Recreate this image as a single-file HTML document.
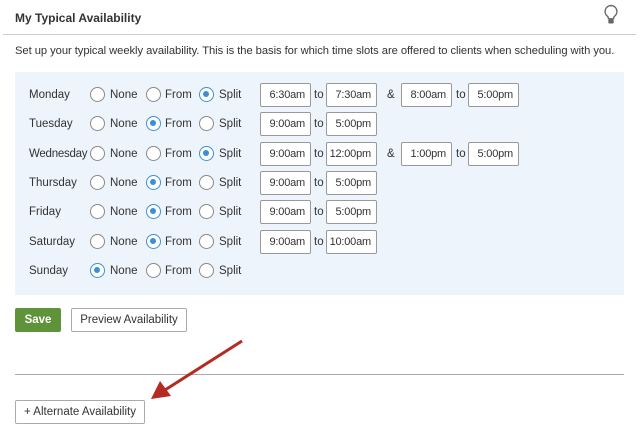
<!DOCTYPE html>
<html><head><style>
body{margin:0;width:640px;height:438px;background:#fff;font-family:"Liberation Sans",sans-serif;color:#333;position:relative;overflow:hidden}
.a{position:absolute}
.t{font-size:12px;font-weight:bold;left:15px;top:11px;color:#333}
.hr{left:3px;top:34px;width:633px;height:1px;background:#ccc}
.d{left:15px;top:45px;font-size:11.2px;color:#333;white-space:nowrap;letter-spacing:-0.05px}
.panel{left:15px;top:72px;width:609px;height:223px;background:#edf4fc}
.row{position:absolute;left:0;height:24px;font-size:11.5px;width:640px}
.row span{position:absolute;top:6px}
.r{position:absolute;top:4px;width:15px;height:15px;border:1px solid #888;border-radius:50%;background:#fff;box-sizing:border-box}
.r.on{border:1.5px solid #3a8fd8}
.r.on:after{content:"";position:absolute;left:3px;top:3px;width:6px;height:6px;border-radius:50%;background:#3a8fd8}
.b{position:absolute;top:0;height:24px;width:51px;border:1px solid #999;border-radius:2px;background:#fff;box-sizing:border-box;text-align:right;padding-right:5px;line-height:23px;font-size:11px;letter-spacing:-0.2px}
.btn{position:absolute;height:24px;border:1px solid #aaa;border-radius:2px;box-sizing:border-box;font-size:11.5px;line-height:23px;text-align:center;background:#fff;color:#333}
</style></head><body>
<div class="a t">My Typical Availability</div>
<svg class="a" style="left:603px;top:4px" width="16" height="22" viewBox="0 0 16 22"><path d="M8 1.5a6 6 0 0 0-3.5 10.8c.8.7 1 1.5 1 2.5h5c0-1 .2-1.8 1-2.5A6 6 0 0 0 8 1.5z" fill="none" stroke="#666" stroke-width="1.4"/><rect x="5.3" y="15.5" width="5.4" height="4" rx="1" fill="#666"/></svg>
<div class="a hr"></div>
<div class="a d">Set up your typical weekly availability. This is the basis for which time slots are offered to clients when scheduling with you.</div>
<div class="a panel"></div>
<div id="rows"></div>
<div class="btn" style="left:15px;top:308px;width:46px;background:#5f933a;border-color:#5f933a;color:#fff;font-weight:bold">Save</div>
<div class="btn" style="left:71px;top:308px;width:116px">Preview Availability</div>
<div class="a" style="left:15px;top:374px;width:609px;height:1px;background:#aaa"></div>
<div class="btn" style="left:15px;top:400px;width:130px">+ Alternate Availability</div>
<svg class="a" style="left:0;top:0" width="640" height="438"><line x1="242" y1="341" x2="165" y2="390" stroke="#b52a22" stroke-width="3"/><polygon points="151,399 160,381 171,396" fill="#b52a22"/></svg>
<script>
var rows=[["Monday",2,["6:30am","7:30am","8:00am","5:00pm"]],["Tuesday",1,["9:00am","5:00pm"]],["Wednesday",2,["9:00am","12:00pm","1:00pm","5:00pm"]],["Thursday",1,["9:00am","5:00pm"]],["Friday",1,["9:00am","5:00pm"]],["Saturday",1,["9:00am","10:00am"]],["Sunday",0,[]]];
var h="";rows.forEach(function(r,i){var y=83+i*29.3;
h+='<div class="row" style="top:'+y+'px"><span style="left:29px;'+(i==2?'letter-spacing:-0.25px':'')+'">'+r[0]+'</span>';
var xs=[90,146,199],ls=["None","From","Split"],lx=[110,165,219];
for(var k=0;k<3;k++){h+='<div class="r'+(r[1]==k?' on':'')+'" style="left:'+xs[k]+'px"></div><span style="left:'+lx[k]+'px">'+ls[k]+'</span>';}
var t=r[2];if(t.length){h+='<div class="b" style="left:260px">'+t[0]+'</div><span style="left:314px">to</span><div class="b" style="left:326px">'+t[1]+'</div>';}
if(t.length>2){h+='<span style="left:387px">&amp;</span><div class="b" style="left:401px">'+t[2]+'</div><span style="left:456px">to</span><div class="b" style="left:468px">'+t[3]+'</div>';}
h+='</div>';});
document.getElementById("rows").innerHTML=h;
</script>
</body></html>
